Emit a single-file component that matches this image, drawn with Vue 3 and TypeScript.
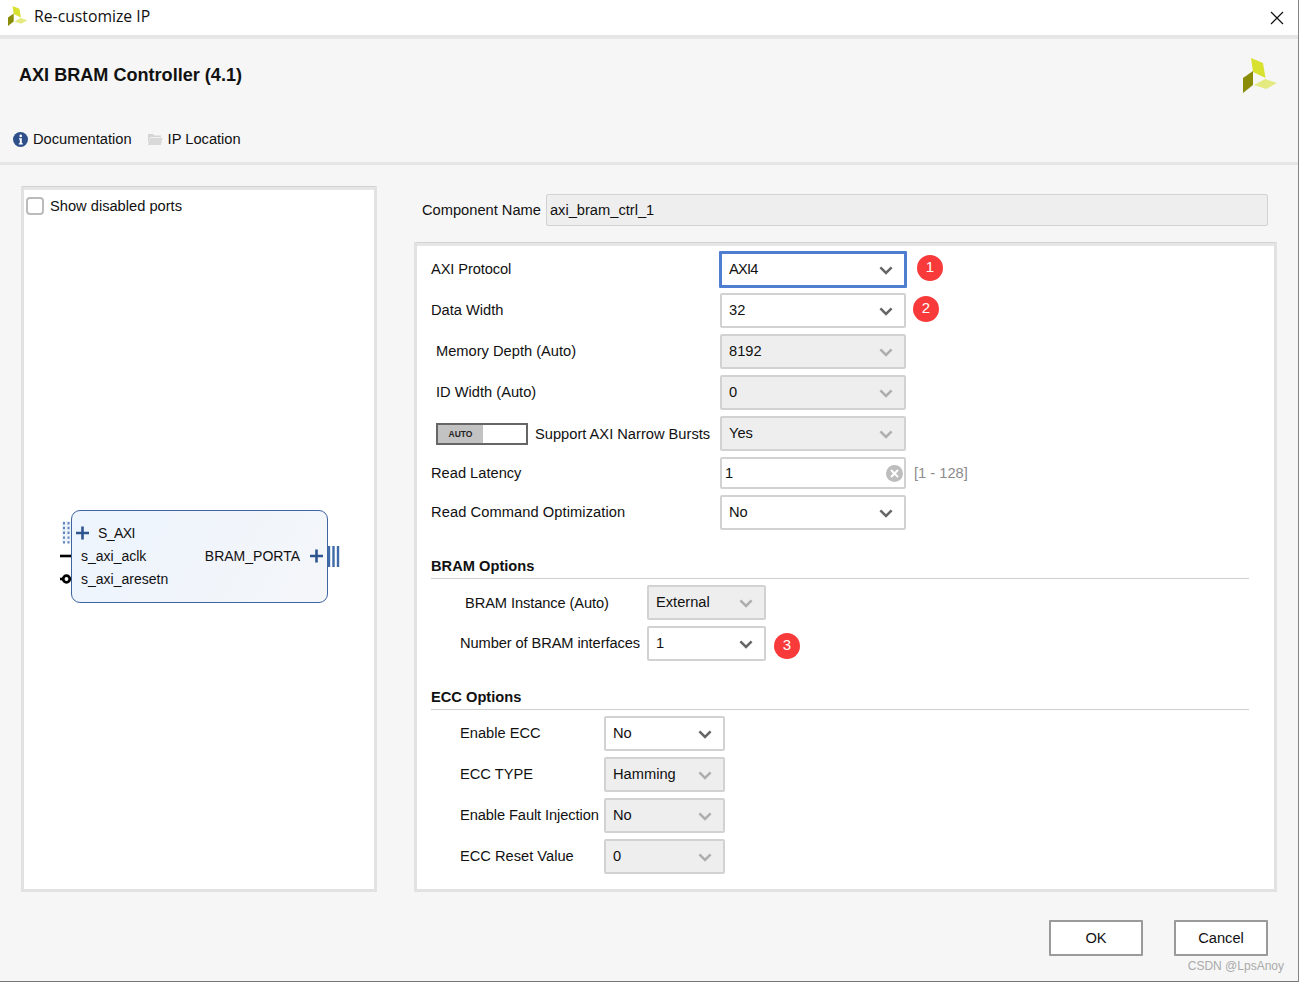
<script setup lang="ts">
interface Field {
  label: string
  value: string
  disabled?: boolean
  focused?: boolean
  indent?: boolean
  tight?: boolean
  badge?: string
}

const topFields: Field[] = [
  { label: 'AXI Protocol', value: 'AXI4', focused: true, tight: true, badge: '1' },
  { label: 'Data Width', value: '32', badge: '2' },
  { label: 'Memory Depth (Auto)', value: '8192', disabled: true, indent: true },
  { label: 'ID Width (Auto)', value: '0', disabled: true, indent: true }
]

const bramFields: Field[] = [
  { label: 'BRAM Instance (Auto)', value: 'External', disabled: true, indent: true, tight: true },
  { label: 'Number of BRAM interfaces', value: '1', tight: true, badge: '3' }
]

const eccFields: Field[] = [
  { label: 'Enable ECC', value: 'No' },
  { label: 'ECC TYPE', value: 'Hamming', disabled: true },
  { label: 'Enable Fault Injection', value: 'No', disabled: true, tight: true },
  { label: 'ECC Reset Value', value: '0', disabled: true }
]
</script>

<template>
  <div class="window">
    <div class="titlebar">
      <svg class="app-logo" width="20" height="20" viewBox="0 0 35 35">
        <polygon points="8,0 20,5 22.5,20 10,14" fill="#d8e030" />
        <polygon points="10,13 10,27 0,35 0,20" fill="#8a8c08" />
        <polygon points="22,21 34,25 23,31 11,27" fill="#e4ea80" />
      </svg>
      <span class="title-text">Re-customize IP</span>
      <svg class="close" width="14" height="14" viewBox="0 0 14 14">
        <path d="M1 1L13 13M13 1L1 13" stroke="#111" stroke-width="1.2" fill="none" />
      </svg>
    </div>

    <div class="header">
      <div class="header-top">
        <h1>AXI BRAM Controller (4.1)</h1>
        <svg width="35" height="35" viewBox="0 0 35 35">
          <polygon points="8,0 20,5 22.5,20 10,14" fill="#d8e030" />
          <polygon points="10,13 10,27 0,35 0,20" fill="#8a8c08" />
          <polygon points="22,21 34,25 23,31 11,27" fill="#e4ea80" />
        </svg>
      </div>
      <div class="links">
        <svg width="15" height="15" viewBox="0 0 15 15">
          <circle cx="7.5" cy="7.5" r="7.5" fill="#2f4f8a" />
          <circle cx="7.7" cy="3.9" r="1.3" fill="#fff" />
          <path d="M6 6.3h2.8v5h1v1.1H5.8v-1.1h1v-3.9H6z" fill="#fff" />
        </svg>
        <span class="link-text">Documentation</span>
        <svg class="folder" width="16" height="14" viewBox="0 0 16 14">
          <path d="M1 2h5l1.5 1.5H14V5H3L1 12z" fill="#d4d4d4" />
          <path d="M3.2 5.8H15.5L14 13H1z" fill="#d9d9d9" />
        </svg>
        <span class="link-text">IP Location</span>
      </div>
    </div>

    <div class="body">
      <div class="symbol-panel">
        <label class="show-ports">
          <span class="checkbox"></span>
          Show disabled ports
        </label>

        <div class="canvas">
          <div class="block">
            <span class="pin-text s-axi">S_AXI</span>
            <span class="pin-text aclk">s_axi_aclk</span>
            <span class="pin-text aresetn">s_axi_aresetn</span>
            <span class="pin-text porta">BRAM_PORTA</span>
          </div>
          <svg class="wires" width="300" height="100" viewBox="0 0 300 100">
            <rect x="2" y="11" width="9" height="22" fill="#edf3fb" />
            <path d="M4 12v22M8.500 12v22" stroke="#5f85ba" stroke-width="2" stroke-dasharray="2.400 2.400" fill="none" />
            <path d="M16 23h13M22.500 16.500v13" stroke="#2f5590" stroke-width="2.600" fill="none" />
            <path d="M0 46h11" stroke="#000" stroke-width="2.600" />
            <circle cx="6.500" cy="69" r="3.300" fill="#fff" stroke="#000" stroke-width="2.800" />
            <path d="M0 69h3" stroke="#000" stroke-width="2.600" />
            <path d="M250 46h13M256.500 39.500v13" stroke="#2f5590" stroke-width="2.600" fill="none" />
            <path d="M269 36v21M273.500 36v21M278 36v21" stroke="#3f6ba8" stroke-width="2.400" fill="none" />
          </svg>
        </div>
      </div>

      <div class="config">
        <div class="component-row">
          <span>Component Name</span>
          <div class="name-box">axi_bram_ctrl_1</div>
        </div>

        <div class="options-panel">
          <div class="rows top-rows">
            <div v-for="f in topFields" :key="f.label" class="row">
              <span class="label lift" :class="{ indent: f.indent, tight: f.tight }">{{ f.label }}</span>
              <div class="combo" :class="{ disabled: f.disabled, focused: f.focused }">
                <span class="lift">{{ f.value }}</span>
                <svg class="chev" width="14" height="9" viewBox="0 0 12 8">
                  <path d="M1 1.200L6 6.200L11 1.200" fill="none" stroke-width="2.200" />
                </svg>
              </div>
              <span v-if="f.badge" class="badge" :class="`badge-${f.badge}`">{{ f.badge }}</span>
            </div>

            <div class="row">
              <div class="label indent toggle-label">
                <div class="toggle"><span class="auto">AUTO</span></div>
                <span>Support AXI Narrow Bursts</span>
              </div>
              <div class="combo disabled">
                <span class="lift">Yes</span>
                <svg class="chev" width="14" height="9" viewBox="0 0 12 8">
                  <path d="M1 1.200L6 6.200L11 1.200" fill="none" stroke-width="2.200" />
                </svg>
              </div>
            </div>

            <div class="row short">
              <span class="label">Read Latency</span>
              <div class="combo text-input">
                <span>1</span>
                <svg width="17" height="17" viewBox="0 0 17 17">
                  <circle cx="8.500" cy="8.500" r="8.500" fill="#bdbdbd" />
                  <path d="M5 5L12 12M12 5L5 12" stroke="#fff" stroke-width="2" />
                </svg>
              </div>
              <span class="range">[1 - 128]</span>
            </div>

            <div class="row">
              <span class="label lift loose">Read Command Optimization</span>
              <div class="combo">
                <span class="lift">No</span>
                <svg class="chev" width="14" height="9" viewBox="0 0 12 8">
                  <path d="M1 1.200L6 6.200L11 1.200" fill="none" stroke-width="2.200" />
                </svg>
              </div>
            </div>
          </div>

          <h2 class="section">BRAM Options</h2>
          <div class="rows">
            <div v-for="f in bramFields" :key="f.label" class="row">
              <span class="label bram-label" :class="{ indent: f.indent, tight: f.tight, lift: !f.indent }">{{ f.label }}</span>
              <div class="combo bram-combo" :class="{ disabled: f.disabled }">
                <span class="lift">{{ f.value }}</span>
                <svg class="chev" width="14" height="9" viewBox="0 0 12 8">
                  <path d="M1 1.200L6 6.200L11 1.200" fill="none" stroke-width="2.200" />
                </svg>
              </div>
              <span v-if="f.badge" class="badge" :class="`badge-${f.badge}`">{{ f.badge }}</span>
            </div>
          </div>

          <h2 class="section">ECC Options</h2>
          <div class="rows">
            <div v-for="f in eccFields" :key="f.label" class="row">
              <span class="label ecc-label lift" :class="{ tight: f.tight }">{{ f.label }}</span>
              <div class="combo ecc-combo" :class="{ disabled: f.disabled }">
                <span class="lift">{{ f.value }}</span>
                <svg class="chev" width="14" height="9" viewBox="0 0 12 8">
                  <path d="M1 1.200L6 6.200L11 1.200" fill="none" stroke-width="2.200" />
                </svg>
              </div>
            </div>
          </div>
        </div>
      </div>
    </div>

    <div class="footer">
      <button class="btn">OK</button>
      <button class="btn">Cancel</button>
    </div>
    <div class="watermark">CSDN @LpsAnoy</div>
  </div>
</template>

<style>
body {
  margin: 0;
}
</style>

<style scoped>
.window {
  position: relative;
  width: 1299px;
  height: 982px;
  box-sizing: border-box;
  overflow: hidden;
  background: #f6f6f6;
  border-right: 1px solid #858585;
  border-bottom: 1px solid #777;
  color: #111;
  font-family: "Liberation Sans", Arial, sans-serif;
  font-size: 14.67px;
}

.titlebar {
  display: flex;
  align-items: center;
  height: 31px;
  padding: 0 14px 4px 8px;
  background: #fff;
  border-bottom: 4px solid #e6e6e6;
}

.app-logo {
  margin-right: 6px;
}

.title-text {
  font-family: "Open Sans", sans-serif;
  font-size: 15.75px;
}

.close {
  margin-left: auto;
  margin-top: 4px;
}

.header {
  box-sizing: border-box;
  height: 126px;
  border-bottom: 3px solid #e6e6e6;
}

.header-top {
  display: flex;
  justify-content: space-between;
  height: 76px;
  padding: 19px 20px 0 19px;
  box-sizing: border-box;
}

.header-top h1 {
  margin: 6px 0 0;
  font-size: 18.08px;
  line-height: 22px;
}

.links {
  display: flex;
  align-items: center;
  height: 48px;
  padding: 0 0 0 13px;
}

.link-text {
  margin-left: 5px;
}

.folder {
  margin-left: 15px;
}

.body {
  display: flex;
  padding: 21px 0 0 21px;
}

.symbol-panel {
  box-sizing: border-box;
  width: 356px;
  height: 706px;
  padding-top: 3px;
  background: #fff;
  border: 3px solid #e2e2e2;
  border-top: 1px solid #d2d2d2;
  box-shadow: inset 0 3px 0 #e6e6e6;
}

.show-ports {
  display: flex;
  align-items: center;
  gap: 6px;
  height: 18px;
  margin: 7px 0 0 2px;
}

.checkbox {
  box-sizing: border-box;
  width: 18px;
  height: 18px;
  border: 2px solid #bbb;
  border-radius: 4px;
}

.canvas {
  position: relative;
  height: 300px;
  margin-top: 295px;
}

.block {
  position: absolute;
  left: 47px;
  top: 0;
  box-sizing: border-box;
  width: 257px;
  height: 93px;
  border: 1px solid #3f64a0;
  border-radius: 9px;
  background: linear-gradient(120deg, #edf4fd, #f4f6f9);
  font-size: 14px;
}

.pin-text {
  position: absolute;
  white-space: nowrap;
}

.s-axi { left: 26px; top: 14px; letter-spacing: -0.6px; }
.aclk { left: 9px; top: 37px; }
.aresetn { left: 9px; top: 60px; }
.porta { right: 27px; top: 37px; }

.wires {
  position: absolute;
  left: 36px;
  top: 0;
}

.config {
  width: 863px;
  margin-left: 37px;
}

.component-row {
  display: flex;
  align-items: center;
  gap: 5px;
  height: 32px;
  margin-top: 8px;
  padding-left: 8px;
}

.name-box {
  box-sizing: border-box;
  width: 722px;
  height: 32px;
  padding: 7px 3px;
  background: #eee;
  border: 1px solid #d2d2d2;
  border-radius: 2px;
}

.options-panel {
  box-sizing: border-box;
  height: 650px;
  margin-top: 16px;
  padding: 9px 25px 0 14px;
  background: #fff;
  border: 3px solid #e2e2e2;
  border-top: 1px solid #d2d2d2;
  box-shadow: inset 0 3px 0 #e6e6e6;
}

.rows {
  display: flex;
  flex-direction: column;
  gap: 6px;
}

.row {
  display: flex;
  align-items: center;
  height: 35px;
}

.row.short {
  height: 32px;
}

.label {
  flex: none;
  width: 289px;
  box-sizing: border-box;
}

.label.indent {
  padding-left: 5px;
}

.lift {
  margin-bottom: 2px;
}

.tight {
  letter-spacing: -0.1px;
}

.loose {
  letter-spacing: 0.08px;
}

.toggle-label {
  display: flex;
  align-items: center;
  gap: 7px;
}

.toggle {
  box-sizing: border-box;
  width: 92px;
  height: 22px;
  background: #fff;
  border: 2px solid #666;
}

.auto {
  display: block;
  width: 45px;
  height: 18px;
  background: #c2c2c2;
  color: #222;
  font-size: 8.5px;
  font-weight: bold;
  line-height: 18px;
  text-align: center;
}

.combo {
  flex: none;
  display: flex;
  align-items: center;
  justify-content: space-between;
  box-sizing: border-box;
  width: 186px;
  height: 35px;
  padding: 0 11px 0 7px;
  background: #fff;
  border: 2px solid #d2d2d2;
  border-radius: 2px;
}

.combo.disabled {
  background: #eee;
}

.combo.focused {
  width: 188px;
  height: 37px;
  margin: 0 -1px;
  border: 3px solid #4f7ed0;
  border-radius: 1px;
}

.combo.focused .lift {
  letter-spacing: -0.8px;
}

.chev {
  margin-top: 1px;
  stroke: #666;
}

.disabled .chev {
  stroke: #aeaeae;
}

.text-input {
  height: 32px;
  padding: 0 1px 0 3px;
}

.range {
  margin-left: 8px;
  color: #8c8c8c;
}

.badge {
  box-sizing: border-box;
  width: 26px;
  height: 26px;
  border-radius: 50%;
  background: #f93a3a;
  color: #fff;
  font-size: 15px;
  line-height: 24px;
  text-align: center;
}

.badge-1 { margin: 0 0 3px 11px; }
.badge-2 { margin: 0 0 3px 7px; }
.badge-3 { margin: 5px 0 0 8px; }

.section {
  height: 30px;
  margin: 19px 0 6px;
  box-sizing: border-box;
  padding-top: 8px;
  font-size: 14.67px;
  line-height: 19px;
  border-bottom: 1px solid #cfcfcf;
}

.bram-label {
  width: 216px;
  padding-left: 29px;
}

.bram-label.indent {
  padding-left: 34px;
}

.bram-combo {
  width: 119px;
}

.ecc-label {
  width: 173px;
  padding-left: 29px;
}

.ecc-combo {
  width: 121px;
}

.footer {
  display: flex;
  justify-content: flex-end;
  gap: 31px;
  margin-top: 28px;
  padding-right: 30px;
}

.btn {
  box-sizing: border-box;
  width: 94px;
  height: 36px;
  padding: 0;
  background: #fff;
  border: 2px solid #9a9a9a;
  border-radius: 1px;
  color: #111;
  font: inherit;
}

.watermark {
  position: absolute;
  right: 14px;
  top: 959px;
  color: #aaa;
  font-size: 12px;
}
</style>
